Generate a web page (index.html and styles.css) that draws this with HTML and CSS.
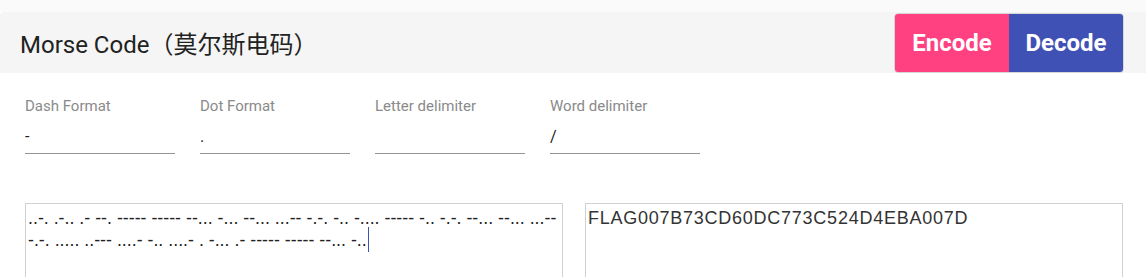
FILE: index.html
```html
<!DOCTYPE html>
<html>
<head>
    <meta charset="UTF-8">
    <title>Morse Code</title>
    <link rel="stylesheet" href="styles.css">
</head>
<body>
    <div class="top-strip"></div>
    <div class="header">
        <h1 class="title">Morse Code（莫尔斯电码）</h1>
        <div class="btn-group">
            <button class="btn btn-encode">Encode</button>
            <button class="btn btn-decode">Decode</button>
        </div>
    </div>

    <div class="options">
        <div class="field">
            <label for="dash">Dash Format</label>
            <input type="text" id="dash" value="-">
        </div>
        <div class="field">
            <label for="dot">Dot Format</label>
            <input type="text" id="dot" value=".">
        </div>
        <div class="field">
            <label for="letter">Letter delimiter</label>
            <input type="text" id="letter" value="">
        </div>
        <div class="field">
            <label for="word">Word delimiter</label>
            <input type="text" id="word" value="/">
        </div>
    </div>

    <div class="boxes">
        <div class="box box-morse">..-. .-.. .- --. ----- ----- --... -... --... ...-- -.-. -.. -.... ----- -.. -.-. --... --... ...-- -.-. ..... ..--- ....- -.. ....- . -... .- ----- ----- --... -..<span class="caret"></span></div>
        <div class="box box-plain">FLAG007B73CD60DC773C524D4EBA007D</div>
    </div>
</body>
</html>
```

FILE: styles.css
```css
body {
    margin: 0;
    font-family: Roboto, "Noto Sans CJK SC", sans-serif;
    background-color: #fff;
    color: #222;
}
.top-strip {
    height: 12px;
    background-color: #fafafa;
}
.header {
    display: flex;
    justify-content: space-between;
    align-items: stretch;
    height: 61px;
    padding: 0 22px 0 20px;
    background-color: #f5f5f5;
    border-radius: 4px 0 0 0;
}
.title {
    margin: 0;
    align-self: center;
    font-size: 24px;
    font-weight: 400;
    color: #222;
}
.btn-group {
    display: flex;
    margin: 1px 0 0;
    height: 58px;
    border: 1px solid #d6d6d6;
    border-radius: 4px;
    overflow: hidden;
}
.btn {
    border: none;
    padding: 0 16px;
    font-family: Roboto, sans-serif;
    font-size: 24px;
    font-weight: 700;
    color: #fff;
    cursor: pointer;
}
.btn-encode {
    width: 114px;
    background-color: #ff4081;
}
.btn-decode {
    width: 114px;
    background-color: #3f51b5;
}
.options {
    display: flex;
    gap: 25px;
    padding: 24px 25px 0;
}
.field {
    display: flex;
    flex-direction: column;
    width: 150px;
}
.field label {
    font-size: 15px;
    line-height: 18px;
    color: #8a8a8a;
}
.field input {
    margin-top: 8px;
    height: 26px;
    padding: 0 0 4px;
    border: none;
    border-bottom: 1px solid #949494;
    background: transparent;
    font-family: Roboto, sans-serif;
    font-size: 16px;
    color: #222;
    outline: none;
}
.boxes {
    display: flex;
    gap: 22px;
    padding: 49px 23px 0 25px;
}
.box {
    flex: 1;
    height: 150px;
    padding: 3px 1px 3px 2px;
    border: 1px solid #d0d0d0;
    font-family: "Liberation Sans", Arial, sans-serif;
    font-size: 18px;
    line-height: 22px;
    color: #222;
}
.box-morse {
    font-size: 17.8px;
}
.box-plain {
    letter-spacing: 0.75px;
    color: #333;
}
.caret {
    position: relative;
}
.caret::after {
    content: "";
    position: absolute;
    left: 1px;
    top: -3px;
    height: 25px;
    border-left: 1px solid #3f51b5;
}
```
